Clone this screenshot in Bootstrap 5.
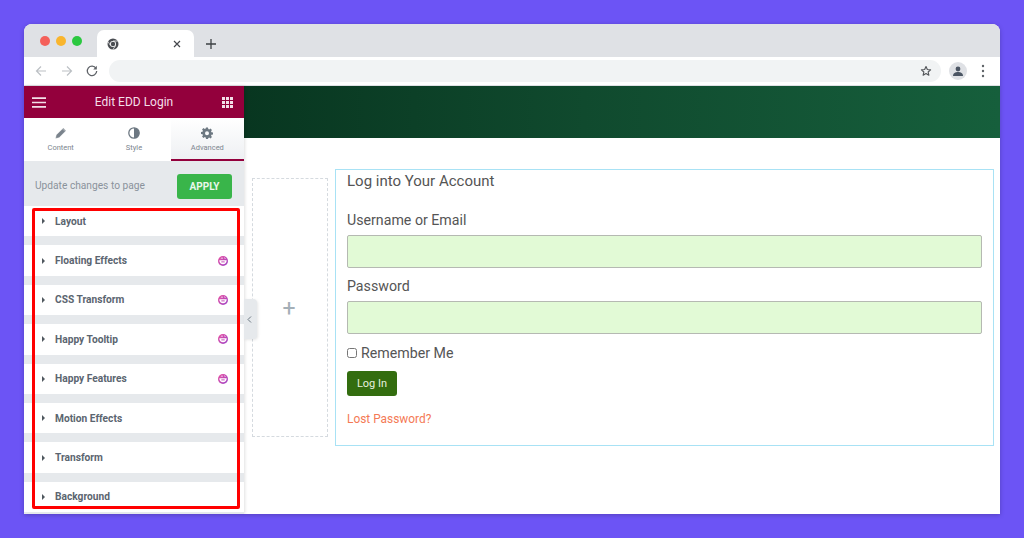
<!DOCTYPE html>
<html lang="en">
<head>
  <meta charset="UTF-8">
  <title>Edit EDD Login</title>
  <link href="https://cdn.jsdelivr.net/npm/bootstrap@5.3.3/dist/css/bootstrap.min.css" rel="stylesheet">
  <style>
    html, body { height: 538px; overflow: hidden; }
    body { background: #6c54f5; font-family: Roboto, "Liberation Sans", sans-serif; color: #54595f; padding: 24px; }
    .browser { width: 976px; height: 490px; background: #fff; border-radius: 8px 8px 0 0; overflow: hidden; box-shadow: 0 1px 4px rgba(40,30,90,.35); position: relative; }
    .tabstrip { height: 33px; background: #dfe1e5; padding: 6px 0 0 73px; }
    .traffic { left: 16px; top: 12px; position: absolute; gap: 6px; }
    .traffic i { width: 10px; height: 10px; border-radius: 50%; display: block; }
    .dot-red { background: #f4605a; }
    .dot-amber { background: #f9b52d; }
    .dot-green { background: #2bc840; }
    .browser-tab { width: 97px; height: 27px; background: #fff; border-radius: 7px 7px 0 0; padding: 0 13px 0 10px; }
    .newtab { width: 14px; margin-left: 12px; }
    .toolbar { height: 29px; padding: 3px 0 0 11px; border-bottom: 1px solid #dfe1e5; }
    .nav-arrows { height: 22px; gap: 13.5px; }
    .urlbar { width: 832px; height: 22px; background: #f1f3f4; border-radius: 11px; margin-left: 11px; padding-right: 9px; }
    .avatar { width: 18px; height: 18px; border-radius: 50%; background: #dfe1e5; margin: 2px 0 0 8px; }
    .menu-dots { margin-left: 14px; }
    .workspace { height: 428px; }
    .side { width: 220px; background: #e6e9ec; box-shadow: 1px 0 3px rgba(0,0,0,.12); position: relative; z-index: 1; }
    .side-head { height: 32px; background: #93003c; color: #f3dfe8; font-size: 12px; font-weight: 400; padding: 0 11px 0 8px; }
    .side-tabs { height: 43px; background: #fff; }
    .side-tab { flex: 1; font-size: 7.5px; color: #7d868f; padding-top: 9px; gap: 3px; }
    .side-tab.on { background: linear-gradient(#fff, #eef0f3); border-bottom: 2px solid #93003c; }
    .apply-row { height: 45px; padding: 5px 12px 0 11px; font-size: 10.2px; color: #8a929b; }
    .apply-btn { width: 55px; height: 25px; background: #39b54a; color: #e9f7eb; font-size: 10px; font-weight: 700; border: 0; border-radius: 3px; padding: 0; }
    .sect { height: 30.4px; background: #fff; margin-bottom: 9px; padding: 0 16px 0 18px; font-size: 10.2px; font-weight: 700; color: #5b6570; }
    .caret-mark { width: 0; height: 0; border-left: 3.5px solid #50585f; border-top: 3px solid transparent; border-bottom: 3px solid transparent; margin-right: 10px; }
    .sect-list { height: 309px; overflow: hidden; }
    .red-frame { position: absolute; left: 8px; top: 122px; width: 208px; height: 301px; border: 3px solid #f00; border-radius: 2px; pointer-events: none; z-index: 3; }
    .grip { position: absolute; left: 220px; top: 213px; width: 13px; height: 40px; padding-left: 3px; background: #e6e9ec; border-radius: 0 4px 4px 0; box-shadow: 1px 1px 3px rgba(0,0,0,.1); z-index: 2; }
    .page-area { flex: 1; min-width: 0; }
    .hero { height: 52px; background: linear-gradient(90deg, #083620 0%, #104a2e 45%, #165f3c 100%); }
    .page-body { padding: 31px 6px 0 8px; gap: 7px; }
    .drop-box { width: 76px; height: 259px; margin-top: 9px; border: 1px dashed #d5dadf; color: #a4afb7; font-size: 23px; font-weight: 400; padding: 4px 2px 0 0; }
    .acct-frame { width: 659px; height: 277px; border: 1px solid #a8e2f5; padding: 0 11px; font-size: 14.2px; color: #555; line-height: 20px; }
    .login-title { font-size: 15px; font-weight: 400; line-height: 22px; margin: 0 0 18px; color: #555; }
    .login-label { margin: 0 0 5px; display: block; line-height: 20px; }
    .login-field { height: 33px; width: 100%; background: #e2fad6; border: 1px solid #b5b9b2; border-radius: 2px; margin-bottom: 8px; display: block; }
    .login-field.last { margin-bottom: 9px; }
    .remember { gap: 4px; margin-bottom: 8px; line-height: 20px; }
    .remember input { width: 10px; height: 10px; margin: 0; }
    .login-btn { width: 50px; height: 25px; background: #336d0f; color: #e6f0df; border: 0; border-radius: 3px; font-size: 11px; padding: 0; display: block; margin-bottom: 12px; }
    .lost-link { color: #f47a55; font-size: 11.9px; text-decoration: none; }
  </style>
</head>
<body>
<div class="browser d-flex flex-column">
  <div class="tabstrip d-flex">
    <div class="traffic d-flex">
      <i class="dot-red"></i><i class="dot-amber"></i><i class="dot-green"></i>
    </div>
    <div class="browser-tab d-flex align-items-center justify-content-between">
      <svg width="12" height="12" viewBox="0 0 12 12"><circle cx="6" cy="6" r="5.5" fill="#4a4d52"/><circle cx="6" cy="6" r="3" fill="#fff"/><circle cx="6" cy="6" r="2.2" fill="#4a4d52"/><path d="M6 3h5M3.4 7.5 1 3.5M8.6 7.5 6 11.5" stroke="#fff" stroke-width=".7" fill="none"/></svg>
      <svg width="8" height="8" viewBox="0 0 8 8"><path d="M1 1l6 6M7 1 1 7" stroke="#45484d" stroke-width="1.2"/></svg>
    </div>
    <div class="newtab d-flex align-items-center">
      <svg width="10" height="10" viewBox="0 0 10 10"><path d="M5 0v10M0 5h10" stroke="#3c4043" stroke-width="1.3"/></svg>
    </div>
  </div>
  <div class="toolbar d-flex align-items-start">
    <div class="nav-arrows d-flex align-items-center">
      <svg width="12" height="12" viewBox="0 0 12 12"><path d="M11 6H1.5M6 1.5 1.500 6 6 10.500" fill="none" stroke="#bcc0c4" stroke-width="1.2"/></svg>
      <svg width="12" height="12" viewBox="0 0 12 12"><path d="M1 6h9.500M6 1.500 10.500 6 6 10.500" fill="none" stroke="#bcc0c4" stroke-width="1.2"/></svg>
      <svg width="12" height="12" viewBox="0 0 12 12"><path d="M10 3.400A4.700 4.700 0 1 0 10.700 6" fill="none" stroke="#5f6368" stroke-width="1.3"/><path d="M10.800 .8v3.600H7.200z" fill="#5f6368"/></svg>
    </div>
    <div class="urlbar d-flex align-items-center justify-content-end">
      <svg width="12" height="12" viewBox="0 0 24 24"><path d="m12 3 2.700 6 6.500.7-4.900 4.300 1.400 6.400-5.700-3.300-5.700 3.300 1.400-6.400-4.900-4.300 6.500-.7z" fill="none" stroke="#55585c" stroke-width="2.300" stroke-linejoin="round"/></svg>
    </div>
    <div class="avatar d-flex align-items-center justify-content-center">
      <svg width="10" height="10" viewBox="0 0 10 10"><circle cx="5" cy="3" r="2.400" fill="#4b5563"/><path d="M0 10c0-3 2.400-4 5-4s5 1 5 4z" fill="#4b5563"/></svg>
    </div>
    <svg class="menu-dots" width="4" height="22" viewBox="0 0 4 22"><circle cx="2" cy="6" r="1.200" fill="#5f6368"/><circle cx="2" cy="11" r="1.200" fill="#5f6368"/><circle cx="2" cy="16" r="1.200" fill="#5f6368"/></svg>
  </div>
  <div class="workspace d-flex position-relative">
    <div class="side">
      <div class="side-head d-flex align-items-center justify-content-between">
        <svg width="14" height="11" viewBox="0 0 14 11"><path d="M0 1.200h14M0 5.500h14M0 9.800h14" stroke="#f3dfe8" stroke-width="1.700"/></svg>
        <span>Edit EDD Login</span>
        <svg width="11" height="11" viewBox="0 0 11 11" fill="#f3dfe8"><path d="M0 0h3v3H0zM4 0h3v3H4zM8 0h3v3H8zM0 4h3v3H0zM4 4h3v3H4zM8 4h3v3H8zM0 8h3v3H0zM4 8h3v3H4zM8 8h3v3H8z"/></svg>
      </div>
      <div class="side-tabs d-flex">
        <div class="side-tab d-flex flex-column align-items-center">
          <svg width="12" height="12" viewBox="0 0 12 12"><path d="M0.500 11.500 1.200 8 8.300 1l2.700 2.700-7 7.100zM7.500 1.800l2.700 2.700" fill="#7a838c" stroke="#fff" stroke-width=".4"/></svg>
          <span>Content</span>
        </div>
        <div class="side-tab d-flex flex-column align-items-center">
          <svg width="12" height="12" viewBox="0 0 12 12"><circle cx="6" cy="6" r="5.200" fill="none" stroke="#6d7882" stroke-width="1.300"/><path d="M6 .8a5.200 5.200 0 0 1 0 10.400z" fill="#6d7882"/></svg>
          <span>Style</span>
        </div>
        <div class="side-tab on d-flex flex-column align-items-center">
          <svg width="12" height="12" viewBox="0 0 24 24"><path fill="#6d7882" fill-rule="evenodd" d="M10 1h4l.6 3.100 1.800.8L19 3.100 21.900 6l-1.800 2.600.8 1.800 3.100.6v4l-3.100.6-.8 1.800 1.800 2.600-2.900 2.900-2.600-1.800-1.800.8L14 24h-4l-.6-3.100-1.800-.8L5 21.900 2.100 19l1.800-2.600-.8-1.800L0 14v-4l3.100-.6.800-1.800L2.100 5 5 2.100l2.600 1.800 1.800-.8zM12 8.500a4 4 0 1 0 0 8 4 4 0 0 0 0-8z"/></svg>
          <span>Advanced</span>
        </div>
      </div>
      <div class="apply-row d-flex align-items-center justify-content-between">
        <span>Update changes to page</span>
        <button class="apply-btn">APPLY</button>
      </div>
      <div class="sect-list" id="sections"></div>
    </div>
    <div class="red-frame"></div>
    <div class="grip d-flex align-items-center">
      <svg width="5" height="7" viewBox="0 0 5 7"><path d="M4 .5 1 3.500 4 6.500" fill="none" stroke="#6d7882" stroke-width="1"/></svg>
    </div>
    <div class="page-area">
      <div class="hero"></div>
      <div class="page-body d-flex align-items-start">
        <div class="drop-box d-flex align-items-center justify-content-center">+</div>
        <div class="acct-frame">
          <h3 class="login-title">Log into Your Account</h3>
          <label class="login-label">Username or Email</label>
          <input class="login-field" type="text">
          <label class="login-label">Password</label>
          <input class="login-field last" type="password">
          <div class="remember d-flex align-items-center"><input type="checkbox"><span>Remember Me</span></div>
          <button class="login-btn">Log In</button>
          <a class="lost-link" href="#">Lost Password?</a>
        </div>
      </div>
    </div>
  </div>
</div>

<script>
  const sections = [
    ["Layout", false], ["Floating Effects", true], ["CSS Transform", true], ["Happy Tooltip", true],
    ["Happy Features", true], ["Motion Effects", false], ["Transform", false], ["Background", false]
  ];
  const happyIcon = i => `<svg class="ms-auto" width="10" height="10" viewBox="0 0 10 10">
    <defs><linearGradient id="hp${i}" x1="0" y1="0" x2="1" y2="1"><stop offset="0" stop-color="#ea4fa0"/><stop offset="1" stop-color="#9c45c9"/></linearGradient></defs>
    <circle cx="5" cy="5" r="5" fill="url(#hp${i})"/><path d="M1.300 4.300h7.400c0 2.600-1.700 3.900-3.700 3.900s-3.700-1.300-3.700-3.900z" fill="#fff"/><path d="M3.300 5.200h3.400v1.300H3.300z" fill="#d277c8"/><path d="M2.800 2.600c.8-.7 1.700-.7 2.200 0M6.200 1.800l1.300.7" stroke="#fff" stroke-width=".8" fill="none"/></svg>`;
  document.getElementById("sections").innerHTML = sections.map((s, i) => `
    <div class="sect d-flex align-items-center">
      <span class="caret-mark"></span><span>${s[0]}</span>${s[1] ? happyIcon(i) : ""}
    </div>`).join("");
</script>
<script src="https://cdn.jsdelivr.net/npm/bootstrap@5.3.3/dist/js/bootstrap.bundle.min.js"></script>
</body>
</html>
